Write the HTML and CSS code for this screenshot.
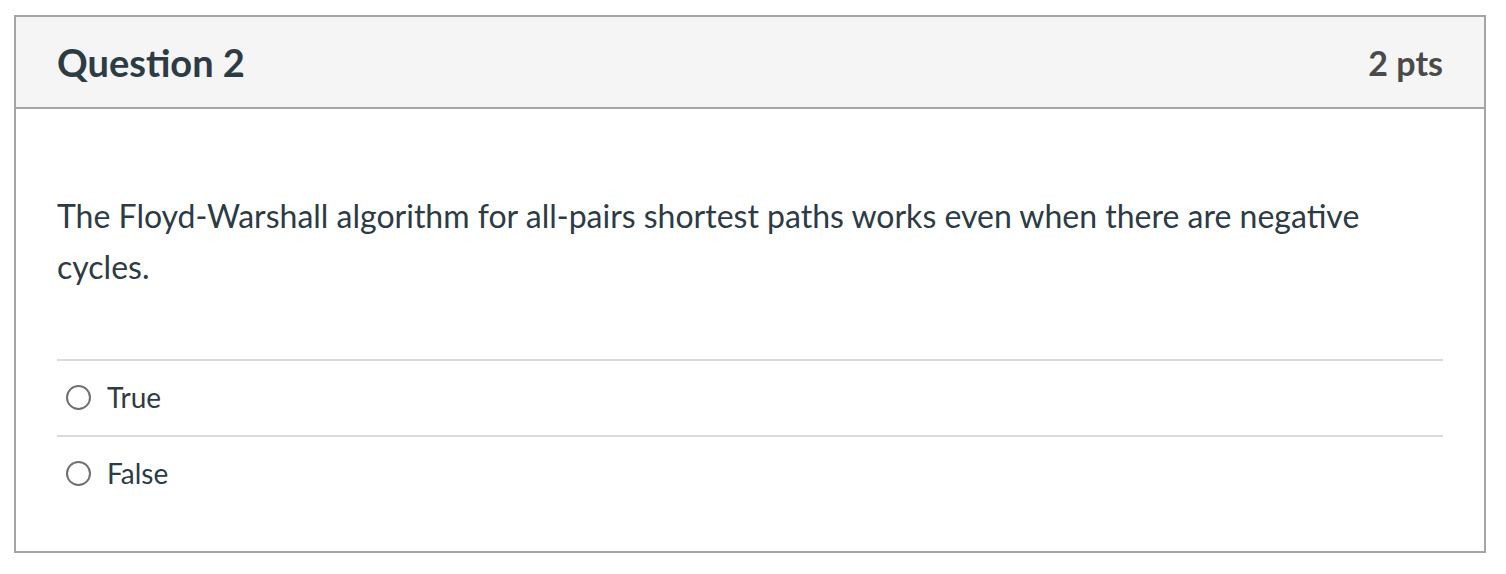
FILE: index.html
```html
<!DOCTYPE html>
<html>
<head>
<meta charset="utf-8">
<link rel="stylesheet" href="styles.css">
</head>
<body>
<div class="card">
  <div class="header">
    <div class="title">Question 2</div>
    <div class="pts">2 pts</div>
  </div>
  <div class="content">
    <p class="question">The Floyd-Warshall algorithm for all-pairs shortest paths works even when there are negative cycles.</p>
    <div class="answers">
      <label class="answer"><span class="radio"></span><span class="label">True</span></label>
      <label class="answer"><span class="radio"></span><span class="label">False</span></label>
    </div>
  </div>
</div>
</body>
</html>
```
FILE: styles.css
```css
html, body {
  margin: 0;
  padding: 0;
  background: #ffffff;
}
body {
  font-family: Lato, "Open Sans", sans-serif;
  color: #2d3b45;
}
.card {
  margin: 15px 0 0 14px;
  width: 1472px;
  height: 538px;
  box-sizing: border-box;
  border: 2px solid #a5a5a5;
}
.header {
  height: 90px;
  background: #f5f5f5;
  border-bottom: 2px solid #a5a5a5;
  display: flex;
  align-items: center;
  justify-content: space-between;
  padding: 0 41px;
}
.title {
  font-size: 38px;
  font-weight: 700;
  color: #2d3b45;
}
.pts {
  font-size: 34px;
  font-weight: 700;
  color: #4a4a4a;
}
.content {
  padding: 0 41px;
}
.question {
  margin: 0;
  padding-top: 81px;
  font-size: 32px;
  line-height: 51px;
  color: #2d3b45;
}
.answers {
  margin-top: 67px;
}
.answer {
  display: flex;
  align-items: center;
  height: 74px;
  border-top: 2px solid #dadada;
}
.radio {
  width: 25px;
  height: 25px;
  box-sizing: border-box;
  border: 2px solid #707070;
  border-radius: 50%;
  margin-left: 9px;
  margin-right: 16px;
  margin-bottom: 1px;
}
.label {
  font-size: 28px;
  color: #2d3b45;
  padding-bottom: 3px;
}
```
